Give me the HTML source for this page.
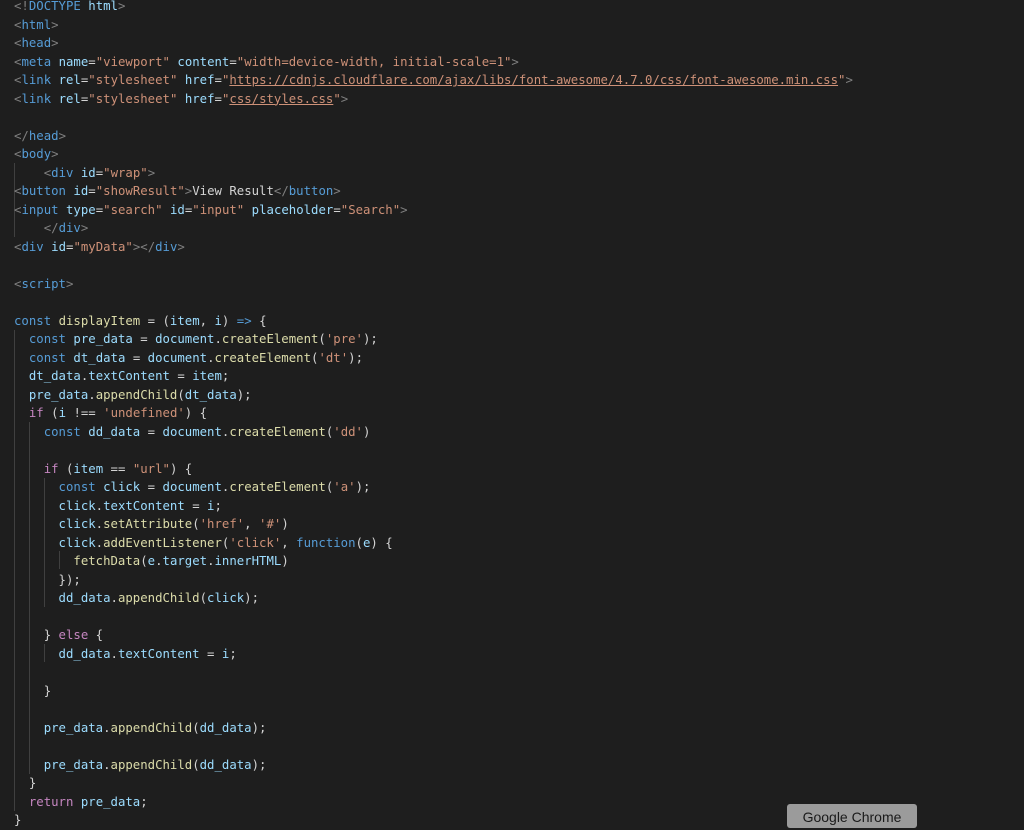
<!DOCTYPE html>
<html><head><style>
body{margin:0;background:#1e1e1e;width:1024px;height:823px;overflow:hidden;position:relative}
pre{position:absolute;left:14px;top:-3px;margin:0;font-family:"DejaVu Sans Mono",monospace;font-size:12.33px;line-height:18.5px;color:#d4d4d4}
.g{color:#808080}.t{color:#569cd6}.a{color:#9cdcfe}.s{color:#ce9178}.u{text-decoration:underline}.f{color:#dcdcaa}.k{color:#c586c0}.v{color:#9cdcfe}
.ig{position:absolute;width:1px;background:#404040}
.tip{position:absolute;left:787px;top:804px;width:130px;height:24px;background:#9b9b9b;border-radius:3px;font-family:"Liberation Sans",sans-serif;font-size:14px;color:#1a1a1a;text-align:center;line-height:26px}
</style></head><body>
<div class="ig" style="left:14px;top:163px;height:74px"></div>
<div class="ig" style="left:14px;top:330px;height:481px"></div>
<div class="ig" style="left:29px;top:422px;height:352px"></div>
<div class="ig" style="left:44px;top:478px;height:129px"></div>
<div class="ig" style="left:44px;top:644px;height:18px"></div>
<div class="ig" style="left:59px;top:551px;height:18px"></div>
<pre><span class="g">&lt;!</span><span class="t">DOCTYPE</span> <span class="a">html</span><span class="g">&gt;</span>
<span class="g">&lt;</span><span class="t">html</span><span class="g">&gt;</span>
<span class="g">&lt;</span><span class="t">head</span><span class="g">&gt;</span>
<span class="g">&lt;</span><span class="t">meta</span> <span class="a">name</span>=<span class="s">"viewport"</span> <span class="a">content</span>=<span class="s">"width=device-width, initial-scale=1"</span><span class="g">&gt;</span>
<span class="g">&lt;</span><span class="t">link</span> <span class="a">rel</span>=<span class="s">"stylesheet"</span> <span class="a">href</span>=<span class="s">"<span class="u">https://cdnjs.cloudflare.com/ajax/libs/font-awesome/4.7.0/css/font-awesome.min.css</span>"</span><span class="g">&gt;</span>
<span class="g">&lt;</span><span class="t">link</span> <span class="a">rel</span>=<span class="s">"stylesheet"</span> <span class="a">href</span>=<span class="s">"<span class="u">css/styles.css</span>"</span><span class="g">&gt;</span>

<span class="g">&lt;/</span><span class="t">head</span><span class="g">&gt;</span>
<span class="g">&lt;</span><span class="t">body</span><span class="g">&gt;</span>
    <span class="g">&lt;</span><span class="t">div</span> <span class="a">id</span>=<span class="s">"wrap"</span><span class="g">&gt;</span>
<span class="g">&lt;</span><span class="t">button</span> <span class="a">id</span>=<span class="s">"showResult"</span><span class="g">&gt;</span>View Result<span class="g">&lt;/</span><span class="t">button</span><span class="g">&gt;</span>
<span class="g">&lt;</span><span class="t">input</span> <span class="a">type</span>=<span class="s">"search"</span> <span class="a">id</span>=<span class="s">"input"</span> <span class="a">placeholder</span>=<span class="s">"Search"</span><span class="g">&gt;</span>
    <span class="g">&lt;/</span><span class="t">div</span><span class="g">&gt;</span>
<span class="g">&lt;</span><span class="t">div</span> <span class="a">id</span>=<span class="s">"myData"</span><span class="g">&gt;&lt;/</span><span class="t">div</span><span class="g">&gt;</span>

<span class="g">&lt;</span><span class="t">script</span><span class="g">&gt;</span>

<span class="t">const</span> <span class="f">displayItem</span> = (<span class="v">item</span>, <span class="v">i</span>) <span class="t">=&gt;</span> {
  <span class="t">const</span> <span class="v">pre_data</span> = <span class="v">document</span>.<span class="f">createElement</span>(<span class="s">'pre'</span>);
  <span class="t">const</span> <span class="v">dt_data</span> = <span class="v">document</span>.<span class="f">createElement</span>(<span class="s">'dt'</span>);
  <span class="v">dt_data</span>.<span class="v">textContent</span> = <span class="v">item</span>;
  <span class="v">pre_data</span>.<span class="f">appendChild</span>(<span class="v">dt_data</span>);
  <span class="k">if</span> (<span class="v">i</span> !== <span class="s">'undefined'</span>) {
    <span class="t">const</span> <span class="v">dd_data</span> = <span class="v">document</span>.<span class="f">createElement</span>(<span class="s">'dd'</span>)

    <span class="k">if</span> (<span class="v">item</span> == <span class="s">"url"</span>) {
      <span class="t">const</span> <span class="v">click</span> = <span class="v">document</span>.<span class="f">createElement</span>(<span class="s">'a'</span>);
      <span class="v">click</span>.<span class="v">textContent</span> = <span class="v">i</span>;
      <span class="v">click</span>.<span class="f">setAttribute</span>(<span class="s">'href'</span>, <span class="s">'#'</span>)
      <span class="v">click</span>.<span class="f">addEventListener</span>(<span class="s">'click'</span>, <span class="t">function</span>(<span class="v">e</span>) {
        <span class="f">fetchData</span>(<span class="v">e</span>.<span class="v">target</span>.<span class="v">innerHTML</span>)
      });
      <span class="v">dd_data</span>.<span class="f">appendChild</span>(<span class="v">click</span>);

    } <span class="k">else</span> {
      <span class="v">dd_data</span>.<span class="v">textContent</span> = <span class="v">i</span>;

    }

    <span class="v">pre_data</span>.<span class="f">appendChild</span>(<span class="v">dd_data</span>);

    <span class="v">pre_data</span>.<span class="f">appendChild</span>(<span class="v">dd_data</span>);
  }
  <span class="k">return</span> <span class="v">pre_data</span>;
}</pre>
<div class="tip">Google Chrome</div>
</body></html>
